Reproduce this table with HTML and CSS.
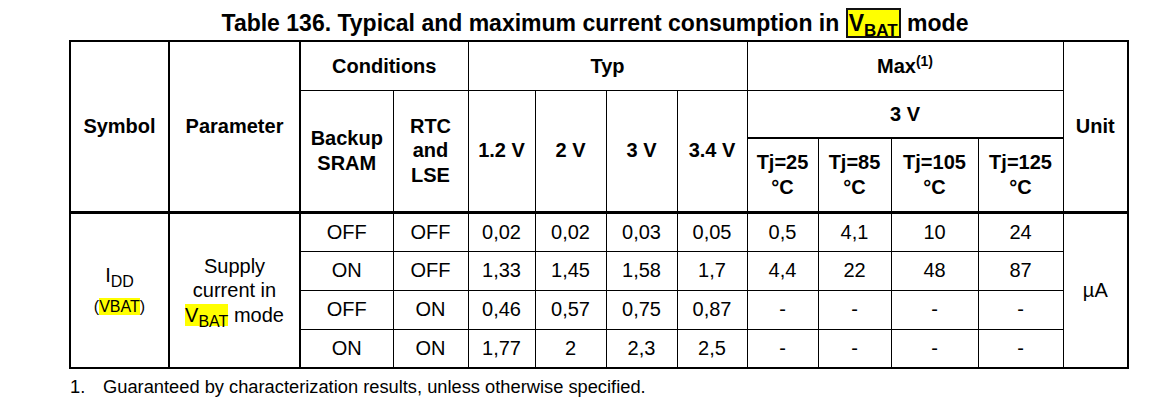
FILE: index.html
```html
<!DOCTYPE html>
<html>
<head>
<meta charset="utf-8">
<link rel="stylesheet" href="styles.css">
</head>
<body>
<div class="sheet">
  <h1 class="title">Table 136. Typical and maximum current consumption in <span class="hl-box">V<sub>BAT</sub></span> mode</h1>
  <table class="spec">
    <colgroup>
      <col class="c-sym"><col class="c-par"><col class="c-bak"><col class="c-rtc">
      <col class="c-t1"><col class="c-t2"><col class="c-t3"><col class="c-t4">
      <col class="c-m1"><col class="c-m2"><col class="c-m3"><col class="c-m4"><col class="c-unit">
    </colgroup>
    <thead>
      <tr class="h1">
        <th rowspan="3" class="sep">Symbol</th>
        <th rowspan="3" class="sep">Parameter</th>
        <th colspan="2">Conditions</th>
        <th colspan="4">Typ</th>
        <th colspan="4">Max<sup>(1)</sup></th>
        <th rowspan="3">Unit</th>
      </tr>
      <tr class="h2">
        <th rowspan="2">Backup<br>SRAM</th>
        <th rowspan="2">RTC<br>and<br>LSE</th>
        <th rowspan="2">1.2 V</th>
        <th rowspan="2">2 V</th>
        <th rowspan="2">3 V</th>
        <th rowspan="2">3.4 V</th>
        <th colspan="4" class="vrow">3 V</th>
      </tr>
      <tr class="h3">
        <th>Tj=25<br>°C</th>
        <th>Tj=85<br>°C</th>
        <th>Tj=105<br>°C</th>
        <th>Tj=125<br>°C</th>
      </tr>
    </thead>
    <tbody>
      <tr>
        <td rowspan="4" class="sep sym"><span class="idd">I<sub>DD</sub></span><span class="small">(<span class="hl">VBAT</span>)</span></td>
        <td rowspan="4" class="sep">Supply<br>current in<br><span class="hl">V<sub>BAT</sub></span> mode</td>
        <td>OFF</td><td>OFF</td>
        <td>0,02</td><td>0,02</td><td>0,03</td><td>0,05</td>
        <td>0,5</td><td>4,1</td><td>10</td><td>24</td>
        <td rowspan="4">µA</td>
      </tr>
      <tr>
        <td>ON</td><td>OFF</td>
        <td>1,33</td><td>1,45</td><td>1,58</td><td>1,7</td>
        <td>4,4</td><td>22</td><td>48</td><td>87</td>
      </tr>
      <tr>
        <td>OFF</td><td>ON</td>
        <td>0,46</td><td>0,57</td><td>0,75</td><td>0,87</td>
        <td>-</td><td>-</td><td>-</td><td>-</td>
      </tr>
      <tr>
        <td>ON</td><td>ON</td>
        <td>1,77</td><td>2</td><td>2,3</td><td>2,5</td>
        <td>-</td><td>-</td><td>-</td><td>-</td>
      </tr>
    </tbody>
  </table>
  <p class="note"><span class="num">1.</span>Guaranteed by characterization results, unless otherwise specified.</p>
</div>
</body>
</html>
```

FILE: styles.css
```css
html, body {
  margin: 0;
  padding: 0;
  background: #fff;
  color: #000;
}

.sheet {
  width: 1058px;
  margin-left: 69px;
  font-family: "Liberation Sans", Arial, sans-serif;
}

.title {
  margin: 0;
  padding-top: 8px;
  height: 36px;
  box-sizing: border-box;
  font-size: 23px;
  line-height: 30px;
  font-weight: bold;
  text-align: center;
  padding-right: 6px;
}

.hl-box {
  background: #ffff00;
  border: 2px solid #111;
  padding: 0 1px;
}

.title sub {
  font-size: 17px;
  vertical-align: -5px;
  line-height: 0;
}

.spec {
  border-collapse: collapse;
  table-layout: fixed;
  width: 1058px;
  border: 2px solid #000;
  font-size: 20px;
  line-height: 24.5px;
  margin-top: 4px;
}

.c-sym { width: 99px; }
.c-par { width: 131px; }
.c-bak { width: 93px; }
.c-rtc { width: 75px; }
.c-t1 { width: 67px; }
.c-t2 { width: 71px; }
.c-t3 { width: 71px; }
.c-t4 { width: 70px; }
.c-m1 { width: 71px; }
.c-m2 { width: 73px; }
.c-m3 { width: 87px; }
.c-m4 { width: 85px; }
.c-unit { width: 65px; }

.spec th,
.spec td {
  border: 1px solid #000;
  padding: 0 1px;
  text-align: center;
  vertical-align: middle;
}

.spec th {
  font-weight: bold;
}

.spec td {
  font-weight: normal;
}

.spec .sep {
  border-right: 2px solid #000;
}

.spec .vrow {
  border-bottom: 2px solid #000;
}

.spec tbody tr:first-child td {
  border-top: 3px solid #000;
}

.h1 { height: 49px; }
.h2 { height: 48px; }
.h3 { height: 74px; }
.spec tbody tr { height: 39px; }

.spec sup {
  font-size: 14px;
  vertical-align: 7px;
  line-height: 0;
}

.spec sub {
  font-size: 16px;
  vertical-align: -5px;
  line-height: 0;
}

.idd {
  display: block;
  margin-bottom: 8px;
}

.small {
  display: block;
  font-size: 16px;
  line-height: 22px;
}

.hl {
  background: #ffff00;
}

.note {
  margin: 7px 0 0 1px;
  font-size: 18.3px;
  line-height: 22px;
}

.num {
  display: inline-block;
  width: 33px;
}
```
